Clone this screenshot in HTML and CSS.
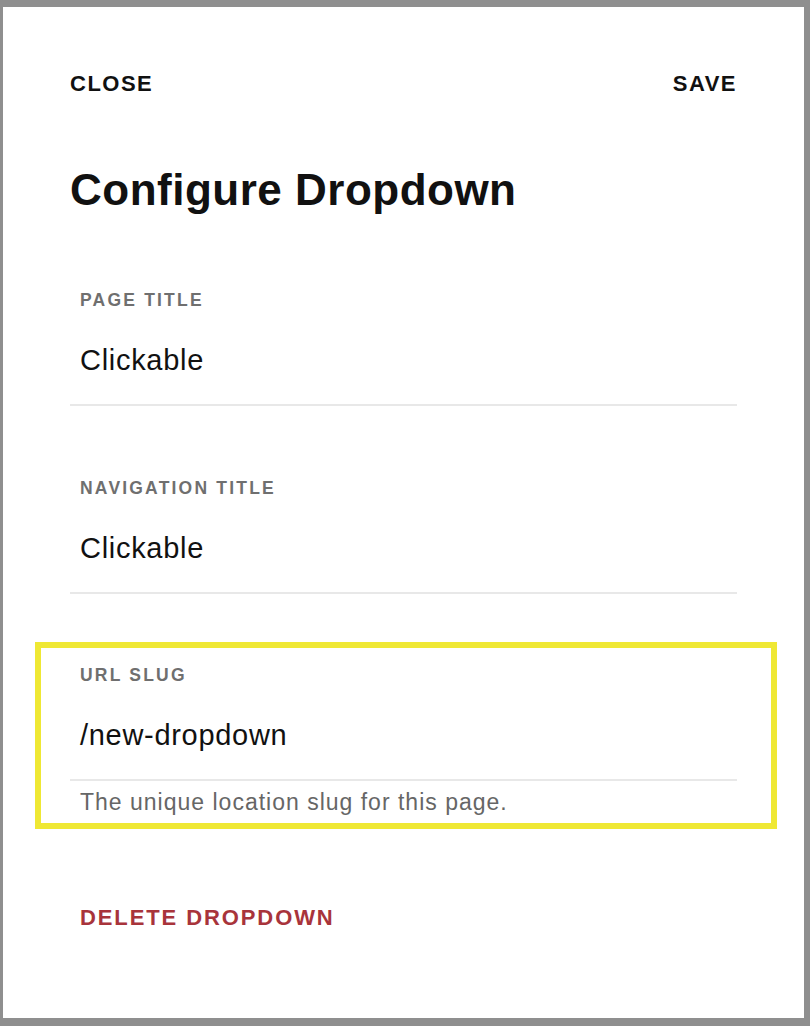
FILE: index.html
```html
<!DOCTYPE html>
<html lang="en">
<head>
<meta charset="utf-8">
<title>Configure Dropdown</title>
<link rel="stylesheet" href="styles.css">
</head>
<body>
<div class="panel">
  <div class="topbar">
    <span class="action">CLOSE</span>
    <span class="action">SAVE</span>
  </div>
  <h1 class="title">Configure Dropdown</h1>
  <div class="field first">
    <div class="label">PAGE TITLE</div>
    <div class="value">Clickable</div>
    <div class="rule"></div>
  </div>
  <div class="field">
    <div class="label">NAVIGATION TITLE</div>
    <div class="value">Clickable</div>
    <div class="rule"></div>
  </div>
  <div class="highlight">
    <div class="field inner">
      <div class="label">URL SLUG</div>
      <div class="value">/new-dropdown</div>
      <div class="rule"></div>
      <div class="help">The unique location slug for this page.</div>
    </div>
  </div>
  <div class="delete">DELETE DROPDOWN</div>
</div>
</body>
</html>
```

FILE: styles.css
```css
html, body {
  margin: 0;
  padding: 0;
}
body {
  background: #8f8f8f;
  font-family: "Liberation Sans", Arial, sans-serif;
  color: #111;
  height: 1026px;
  overflow: hidden;
}
.panel {
  background: #fff;
  margin: 7px 6px 0 3px;
  height: 1011px;
  padding: 64px 67px 0 67px;
  box-sizing: border-box;
}
.topbar {
  display: flex;
  justify-content: space-between;
  height: 26px;
}
.action {
  font-size: 22px;
  line-height: 26px;
  letter-spacing: 1.5px;
  font-weight: 700;
  color: #111;
}
.title {
  margin: 67px 0 0 0;
  font-size: 44px;
  line-height: 52px;
  font-weight: 700;
  letter-spacing: 0.5px;
  color: #111;
}
.field {
  padding-left: 10px;
}
.field.first {
  margin-top: 74px;
}
.field + .field {
  margin-top: 72px;
}
.label {
  font-size: 17.5px;
  line-height: 20px;
  font-weight: 700;
  letter-spacing: 2.2px;
  color: #6f6f6f;
}
.value {
  margin-top: 33px;
  font-size: 29px;
  line-height: 34px;
  letter-spacing: 0.7px;
  color: #111;
}
.rule {
  margin: 27px 0 0 -10px;
  height: 2px;
  background: #e8e8e8;
}
.highlight {
  margin: 48px -40px 0 -35px;
  border: 6px solid #efe834;
  padding: 17px 34px 8px 29px;
}
.field.inner {
  padding-left: 10px;
}
.help {
  margin-top: 8px;
  font-size: 23px;
  line-height: 26px;
  letter-spacing: 1px;
  color: #666;
}
.delete {
  margin: 76px 0 0 10px;
  font-size: 22px;
  line-height: 26px;
  font-weight: 700;
  letter-spacing: 1.9px;
  color: #a8343b;
}
```
